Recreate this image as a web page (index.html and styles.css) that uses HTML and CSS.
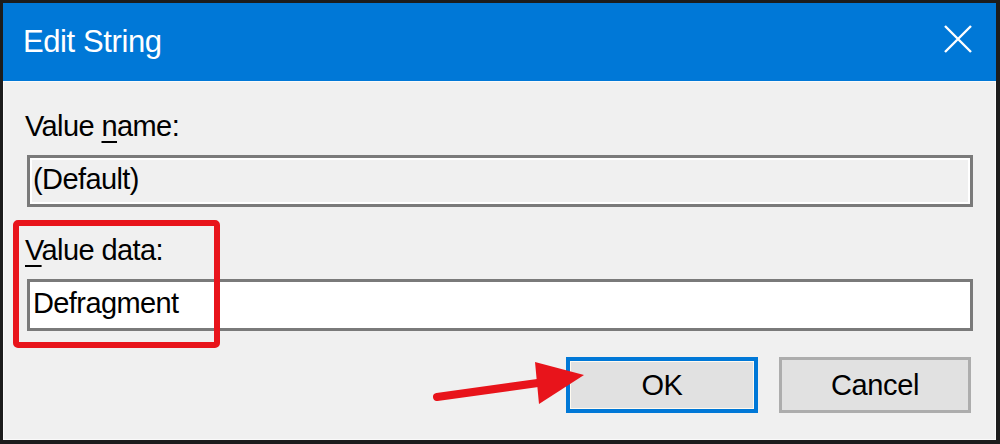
FILE: index.html
```html
<!DOCTYPE html>
<html lang="en">
<head>
<meta charset="utf-8">
<title>Edit String</title>
<link rel="stylesheet" href="styles.css">
</head>
<body>
  <div class="dialog">
    <header class="titlebar">
      <span class="title">Edit String</span>
      <svg class="close" viewBox="0 0 28 28" aria-hidden="true">
        <path d="M1 1 L27 27 M27 1 L1 27" stroke="#ffffff" stroke-width="2.4" fill="none"/>
      </svg>
    </header>
    <main class="content">
      <label class="label">Value <u>n</u>ame:</label>
      <div class="field readonly">(Default)</div>
      <label class="label second"><u>V</u>alue data:</label>
      <div class="field">Defragment</div>
      <div class="buttons">
        <button class="btn default">OK</button>
        <button class="btn">Cancel</button>
      </div>
    </main>
  </div>
  <div class="callout"></div>
  <svg class="arrow" viewBox="0 0 1000 444" aria-hidden="true">
    <line x1="437" y1="397" x2="545" y2="382" stroke="#e8141b" stroke-width="8" stroke-linecap="round"/>
    <polygon points="535,362 584,375 539,404" fill="#e8141b"/>
  </svg>
</body>
</html>
```

FILE: styles.css
```css
html, body {
  margin: 0;
  width: 1000px;
  height: 444px;
  overflow: hidden;
}

body {
  box-sizing: border-box;
  padding: 3px 4px 4px 3px;
  background: #1c1c1c;
  position: relative;
  font-family: "Liberation Sans", Arial, sans-serif;
}

.dialog {
  height: 437px;
  display: flex;
  flex-direction: column;
  background: #f0f0f0;
}

.titlebar {
  height: 78px;
  flex: none;
  background: #0078d7;
  color: #ffffff;
  display: flex;
  align-items: center;
  justify-content: space-between;
  padding: 0 24px 0 20px;
  font-size: 31px;
  letter-spacing: -0.4px;
}

.title {
  line-height: 78px;
}

.close {
  width: 28px;
  height: 28px;
  margin-bottom: 6px;
}

.content {
  flex: 1;
  padding: 29px 23px 0 24px;
  box-shadow: inset 0 0 0 1px #fafafa;
  color: #000000;
}

.label {
  display: block;
  font-size: 29px;
  letter-spacing: -0.6px;
  line-height: 32px;
  margin-left: -2px;
}

.label u {
  text-underline-offset: 5px;
  text-decoration-thickness: 2px;
}

.label.second {
  margin-top: 27px;
}

.field {
  margin-top: 13px;
  height: 52px;
  box-sizing: border-box;
  border: 3px solid #7a7a7a;
  background: #ffffff;
  font-size: 29px;
  letter-spacing: -0.6px;
  line-height: 42px;
  padding: 0 3px 4px;
}

.field.readonly {
  background: #f0f0f0;
  box-shadow: inset 0 0 0 2px #ffffff;
}

.buttons {
  display: flex;
  justify-content: flex-end;
  gap: 21px;
  margin-top: 26px;
  padding-right: 2px;
}

.btn {
  width: 192px;
  height: 56px;
  box-sizing: border-box;
  border: 3px solid #adadad;
  background: #e1e1e1;
  font-family: "Liberation Sans", Arial, sans-serif;
  font-size: 29px;
  letter-spacing: -0.4px;
  color: #000000;
  padding: 0;
}

.btn.default {
  border: 4px solid #0078d7;
  box-shadow: inset 0 0 0 1px #fffaf0;
}

.callout {
  position: absolute;
  left: 13px;
  top: 220px;
  width: 207px;
  height: 128px;
  box-sizing: border-box;
  border: 6px solid #e8141b;
  border-radius: 5px;
}

.arrow {
  position: absolute;
  left: 0;
  top: 0;
  width: 1000px;
  height: 444px;
  pointer-events: none;
}
```
